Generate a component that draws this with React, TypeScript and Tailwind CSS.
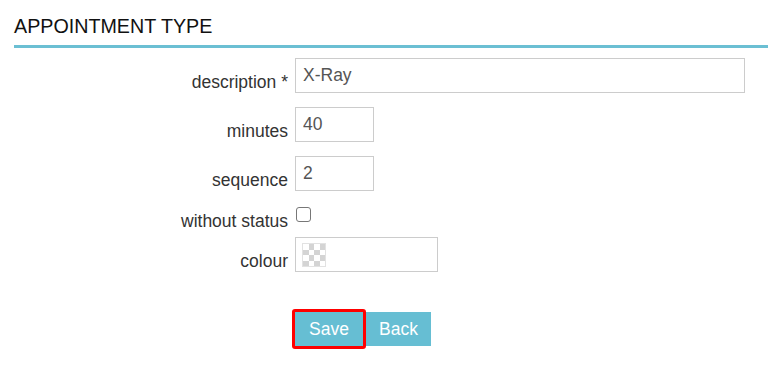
import React from "react";

const font = { fontFamily: '"Liberation Sans", Arial, sans-serif' };

function Checker() {
  const cells = [];
  for (let r = 0; r < 4; r++) {
    for (let c = 0; c < 4; c++) {
      const grey = (r + c) % 2 === 1;
      cells.push(
        <div key={`${r}-${c}`} className={grey ? "bg-[#d4d4d4]" : "bg-white"} />
      );
    }
  }
  return (
    <div className="grid grid-cols-4 grid-rows-4 w-[24px] h-[24px] border border-[#e2e2e2]">
      {cells}
    </div>
  );
}

export default function App() {
  return (
    <div className="w-[768px] h-[369px] bg-white overflow-hidden text-[#333]" style={font}>
      <div className="pl-[14px]">
        <h1 className="text-[19.7px] leading-[24px] pt-[13.5px] text-[#111] font-normal">APPOINTMENT TYPE</h1>
        <div className="mt-[7.5px] h-[2.5px] bg-[#6bbfd3]" />
      </div>

      <div className="mt-[10.5px] text-[17.5px]">
        <div className="flex gap-[7px]">
          <label className="w-[288px] text-right pt-[13.5px] leading-5">description *</label>
          <input
            readOnly
            value="X-Ray"
            className="w-[450px] h-[35px] border border-[#ccc] px-[7px] text-[#555] outline-none"
          />
        </div>
        <div className="flex gap-[7px] mt-[14px]">
          <label className="w-[288px] text-right pt-[13.5px] leading-5">minutes</label>
          <input
            readOnly
            value="40"
            className="w-[79px] h-[35px] border border-[#ccc] px-[7px] text-[#555] outline-none"
          />
        </div>
        <div className="flex gap-[7px] mt-[14px]">
          <label className="w-[288px] text-right pt-[13.5px] leading-5">sequence</label>
          <input
            readOnly
            value="2"
            className="w-[79px] h-[35px] border border-[#ccc] px-[7px] text-[#555] outline-none"
          />
        </div>
        <div className="flex gap-[7px] mt-[14px]">
          <label className="w-[288px] text-right pt-[5.5px] leading-5">without status</label>
          <input
            type="checkbox"
            className="appearance-none mt-[2px] ml-[1px] w-[15px] h-[15px] border border-[#777] rounded-[3px] bg-white"
          />
        </div>
        <div className="flex gap-[7px] mt-[6.5px]">
          <label className="w-[288px] text-right pt-[13.5px] leading-5">colour</label>
          <div className="w-[143px] h-[35px] border border-[#ccc] pl-[6px] pt-[5px]">
            <Checker />
          </div>
        </div>

        <div className="flex items-center mt-[37px] pl-[292px]">
          <button className="w-[74px] h-[40px] border-[3px] border-[#f00] rounded-[3px] bg-[#66bed3] text-white text-[17.5px]">
            Save
          </button>
          <button className="w-[65px] h-[34px] bg-[#66bed3] text-white text-[17.5px]">
            Back
          </button>
        </div>
      </div>
    </div>
  );
}
